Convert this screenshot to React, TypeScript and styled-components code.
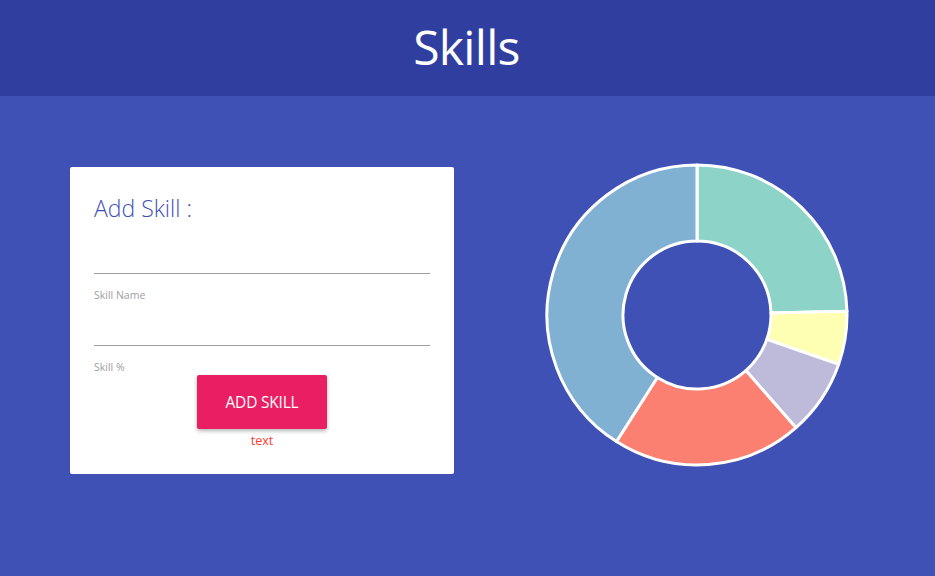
import React from "react";
import styled, { createGlobalStyle } from "styled-components";

const GlobalStyle = createGlobalStyle`
  html, body { margin: 0; padding: 0; }
  body {
    background: #3f51b5;
    font-family: "Open Sans", "Noto Sans", sans-serif;
    width: 935px;
    height: 576px;
    overflow: hidden;
  }
`;

const Header = styled.header`
  height: 96px;
  background: #303f9f;
  display: flex;
  align-items: center;
  justify-content: center;
`;

const HeaderTitle = styled.h1`
  margin: 0;
  color: #fff;
  font-weight: 400;
  font-size: 48px;
  line-height: 96px;
  letter-spacing: -0.7px;
  position: relative;
  top: -1px;
  left: -1px;
`;

const Main = styled.main`
  display: flex;
  align-items: flex-start;
  padding: 71px 0 0 70px;
`;

const Card = styled.section`
  width: 384px;
  height: 307px;
  box-sizing: border-box;
  background: #fff;
  border-radius: 2px;
  padding: 26px 24px 0 24px;
  display: flex;
  flex-direction: column;
`;

const CardTitle = styled.h2`
  margin: 0;
  font-weight: 300;
  font-size: 23px;
  line-height: 30px;
  color: #3f51b5;
`;

const Field = styled.div<{ $gap: number }>`
  display: flex;
  flex-direction: column;
  margin-top: ${(p) => p.$gap}px;
`;

const Input = styled.input`
  border: none;
  border-bottom: 1px solid #9e9e9e;
  outline: none;
  height: 30px;
  padding: 0;
  width: 336px;
  background: transparent;
  font-family: inherit;
  font-size: 14px;
`;

const Label = styled.label`
  margin-top: 14px;
  font-size: 10.5px;
  line-height: 14px;
  color: #9e9e9e;
`;

const Actions = styled.div`
  display: flex;
  flex-direction: column;
  align-items: center;
  margin-top: 1px;
`;

const Button = styled.button`
  width: 130px;
  height: 54px;
  border: none;
  border-radius: 2px;
  background: #e91e63;
  color: #fff;
  font-family: inherit;
  font-size: 15.5px;
  letter-spacing: -0.2px;
  box-shadow: 0 2px 4px rgba(0, 0, 0, 0.3);
  cursor: pointer;
`;

const ErrorText = styled.span`
  margin-top: 3px;
  color: #ff3b30;
  font-size: 12.5px;
  line-height: 18px;
`;

const ChartWrap = styled.div`
  margin-left: 91px;
  margin-top: -4px;
  width: 304px;
  height: 304px;
`;

const data = [
  { value: 30, color: "#8dd3c7" },
  { value: 7, color: "#ffffb3" },
  { value: 10, color: "#bebada" },
  { value: 25, color: "#fb8072" },
  { value: 50, color: "#80b1d3" },
];

function Doughnut() {
  const cx = 152;
  const cy = 152;
  const R = 150;
  const r = 74;
  const total = data.reduce((s, d) => s + d.value, 0);
  let acc = 0;
  const pt = (rad: number, a: number) => [
    cx + rad * Math.sin(a),
    cy - rad * Math.cos(a),
  ];
  return (
    <svg width={304} height={304} viewBox="0 0 304 304">
      {data.map((d, i) => {
        const a0 = (acc / total) * Math.PI * 2;
        acc += d.value;
        const a1 = (acc / total) * Math.PI * 2;
        const large = a1 - a0 > Math.PI ? 1 : 0;
        const [x0, y0] = pt(R, a0);
        const [x1, y1] = pt(R, a1);
        const [x2, y2] = pt(r, a1);
        const [x3, y3] = pt(r, a0);
        const path = `M${x0} ${y0} A${R} ${R} 0 ${large} 1 ${x1} ${y1} L${x2} ${y2} A${r} ${r} 0 ${large} 0 ${x3} ${y3} Z`;
        return (
          <path
            key={i}
            d={path}
            fill={d.color}
            stroke="#fff"
            strokeWidth={3}
            strokeLinejoin="round"
          />
        );
      })}
    </svg>
  );
}

export default function App() {
  return (
    <>
      <GlobalStyle />
      <Header>
        <HeaderTitle>Skills</HeaderTitle>
      </Header>
      <Main>
        <Card>
          <CardTitle>Add Skill :</CardTitle>
          <Field $gap={20}>
            <Input id="skill-name" />
            <Label htmlFor="skill-name">Skill Name</Label>
          </Field>
          <Field $gap={13}>
            <Input id="skill-pct" />
            <Label htmlFor="skill-pct">Skill %</Label>
          </Field>
          <Actions>
            <Button>ADD SKILL</Button>
            <ErrorText>text</ErrorText>
          </Actions>
        </Card>
        <ChartWrap>
          <Doughnut />
        </ChartWrap>
      </Main>
    </>
  );
}
